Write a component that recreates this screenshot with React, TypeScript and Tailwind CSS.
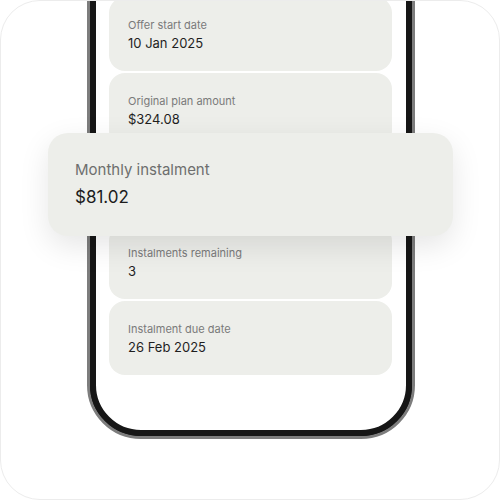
import React from "react";

const rows = [
  { label: "Offer start date", value: "10 Jan 2025" },
  { label: "Original plan amount", value: "$324.08" },
  { label: "Monthly instalment", value: "$81.02", hidden: true },
  { label: "Instalments remaining", value: "3" },
  { label: "Instalment due date", value: "26 Feb 2025" },
];

const App: React.FC = () => {
  return (
    <div
      className="relative w-[500px] h-[500px] overflow-hidden bg-white"
      style={{ fontFamily: "Inter, 'Noto Sans', sans-serif" }}
    >
      {/* outer card */}
      <div className="w-[500px] h-[500px] rounded-[40px] border border-[#ececec] overflow-hidden">
        {/* phone */}
        <div className="ml-[86px] mt-[-60px] w-[328px] h-[498px] rounded-[54px] border-[3px] border-[#7d7d7d] bg-[#161616]">
          <div className="h-full rounded-[51px] border-[6px] border-[#161616] bg-white overflow-hidden">
            <div className="flex flex-col gap-[2px] pt-[47px] pl-[13px] pr-[14px]">
              {rows.map((r) => (
                <div key={r.label} className="h-[74px] rounded-[16px] bg-[#edeeea] pl-[19px] pt-[21px]">
                  <div className={`text-[11px] leading-[14px] text-[#7a7a7a] ${r.hidden ? "invisible" : ""}`}>{r.label}</div>
                  <div className={`mt-[2px] text-[13px] leading-[18px] text-[#1f1f1f] ${r.hidden ? "invisible" : ""}`}>{r.value}</div>
                </div>
              ))}
            </div>
          </div>
        </div>
      </div>

      {/* floating highlight card */}
      <div className="absolute left-[48px] top-[133px] w-[405px] h-[103px] rounded-[20px] bg-[#edeeea] pl-[27px] pt-[27px] shadow-[0_10px_30px_rgba(0,0,0,0.1)]">
        <div className="text-[15px] leading-[20px] text-[#6e6e6e]">Monthly instalment</div>
        <div className="mt-[6px] text-[17px] leading-[22px] text-[#1c1c1c]">$81.02</div>
      </div>
    </div>
  );
};

export default App;
